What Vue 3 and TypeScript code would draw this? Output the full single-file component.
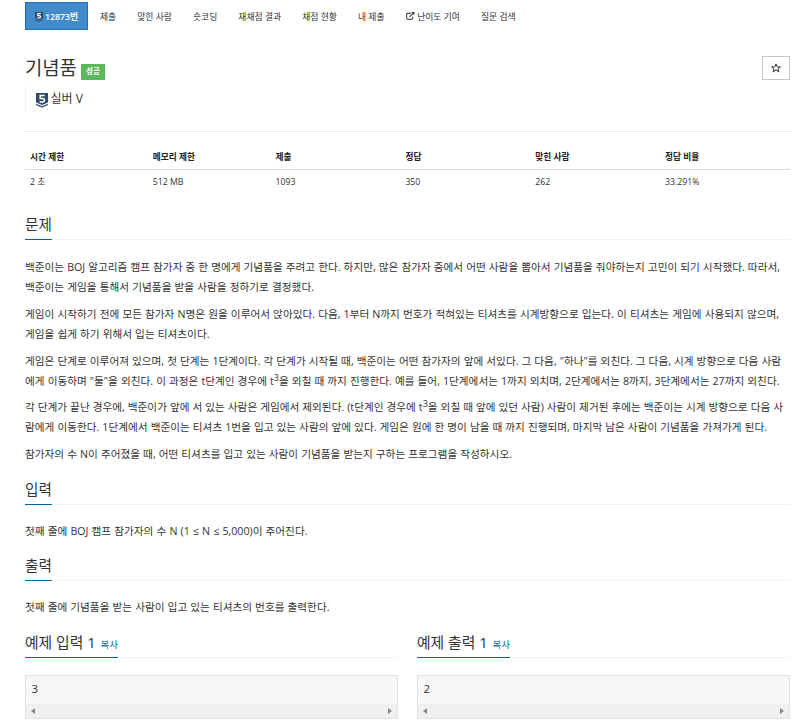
<script setup lang="ts">
interface NavItem { label: string; external?: boolean }
interface Stat { name: string; value: string }
interface Line { width: number; text: string; power?: string; rest?: string }
interface Section { title: string; paragraphs: Line[][] }

const navItems: NavItem[] = [
  { label: '제출' },
  { label: '맞힌 사람' },
  { label: '숏코딩' },
  { label: '재채점 결과' },
  { label: '채점 현황' },
  { label: '내 제출' },
  { label: '난이도 기여', external: true },
  { label: '질문 검색' },
]

const stats: Stat[] = [
  { name: '시간 제한', value: '2 초' },
  { name: '메모리 제한', value: '512 MB' },
  { name: '제출', value: '1093' },
  { name: '정답', value: '350' },
  { name: '맞힌 사람', value: '262' },
  { name: '정답 비율', value: '33.291%' },
]

const sections: Section[] = [
  {
    title: '문제',
    paragraphs: [
      [
        { width: 755, text: '백준이는 BOJ 알고리즘 캠프 참가자 중 한 명에게 기념품을 주려고 한다. 하지만, 많은 참가자 중에서 어떤 사람을 뽑아서 기념품을 줘야하는지 고민이 되기 시작했다. 따라서,' },
        { width: 289, text: '백준이는 게임을 통해서 기념품을 받을 사람을 정하기로 결정했다.' },
      ],
      [
        { width: 754, text: '게임이 시작하기 전에 모든 참가자 N명은 원을 이루어서 앉아있다. 다음, 1부터 N까지 번호가 적혀있는 티셔츠를 시계방향으로 입는다. 이 티셔츠는 게임에 사용되지 않으며,' },
        { width: 184.5, text: '게임을 쉽게 하기 위해서 입는 티셔츠이다.' },
      ],
      [
        { width: 756, text: '게임은 단계로 이루어져 있으며, 첫 단계는 1단계이다. 각 단계가 시작될 때, 백준이는 어떤 참가자의 앞에 서있다. 그 다음, "하나"를 외친다. 그 다음, 시계 방향으로 다음 사람' },
        { width: 754.5, text: '에게 이동하며 "둘"을 외친다. 이 과정은 t단계인 경우에 t', power: '3', rest: '을 외칠 때 까지 진행한다. 예를 들어, 1단계에서는 1까지 외치며, 2단계에서는 8까지, 3단계에서는 27까지 외친다.' },
      ],
      [
        { width: 758, text: '각 단계가 끝난 경우에, 백준이가 앞에 서 있는 사람은 게임에서 제외된다. (t단계인 경우에 t', power: '3', rest: '을 외칠 때 앞에 있던 사람) 사람이 제거된 후에는 백준이는 시계 방향으로 다음 사' },
        { width: 742, text: '람에게 이동한다. 1단계에서 백준이는 티셔츠 1번을 입고 있는 사람의 앞에 있다. 게임은 원에 한 명이 남을 때 까지 진행되며, 마지막 남은 사람이 기념품을 가져가게 된다.' },
      ],
      [{ width: 487, text: '참가자의 수 N이 주어졌을 때, 어떤 티셔츠를 입고 있는 사람이 기념품을 받는지 구하는 프로그램을 작성하시오.' }],
    ],
  },
  {
    title: '입력',
    paragraphs: [[{ width: 282.5, text: '첫째 줄에 BOJ 캠프 참가자의 수 N (1 ≤ N ≤ 5,000)이 주어진다.' }]],
  },
  {
    title: '출력',
    paragraphs: [[{ width: 304.5, text: '첫째 줄에 기념품을 받는 사람이 입고 있는 티셔츠의 번호를 출력한다.' }]],
  },
]

const samples = [
  { title: '예제 입력 1', data: '3' },
  { title: '예제 출력 1', data: '2' },
]
</script>

<template>
  <main class="page">
    <nav class="tabs">
      <a class="tab active">
        <svg class="tier-small" viewBox="0 0 12 15">
          <path d="M0 0h12v9.5L6 12 0 9.5z" fill="#2f4a6b" />
          <path d="M0 10.7l6 2.4 6-2.4v1.6l-6 2.4-6-2.4z" fill="#2f4a6b" />
          <path d="M8.7 2.5H4.2v3h2c3 0 3 3.4 0 3.4H3.6" fill="none" stroke="#fff" stroke-width="1.7" />
        </svg>12873번
      </a>
      <a v-for="item in navItems" :key="item.label" class="tab">
        <svg v-if="item.external" class="external" viewBox="0 0 16 14">
          <path d="M9 2H3.2Q1.2 2 1.2 4v6.8q0 2 2 2H10q2 0 2-2V8.5M6 8.5L13.5 1.5" fill="none" stroke="currentColor" stroke-width="1.8" />
          <path d="M9.5 0H15v5.5z" fill="currentColor" />
        </svg>{{ item.label }}
      </a>
    </nav>

    <header class="heading">
      <div class="title-row">
        <h1>기념품</h1>
        <span class="badge">성공</span>
        <button class="star" type="button" aria-label="즐겨찾기">
          <svg viewBox="0 0 14 14">
            <path d="M7 1.3l1.6 4.1 4.5.1-3.5 2.6 1.3 4.2L7 9.8l-3.9 2.5 1.3-4.2L.9 5.5l4.5-.1z" />
          </svg>
        </button>
      </div>
      <div class="tier">
        <svg viewBox="0 0 12 15">
          <path d="M0 0h12v9.5L6 12 0 9.5z" fill="#2f4a6b" />
          <path d="M0 10.7l6 2.4 6-2.4v1.6l-6 2.4-6-2.4z" fill="#49617f" />
          <path d="M8.7 2.5H4.2v3h2c3 0 3 3.4 0 3.4H3.6" fill="none" stroke="#fff" stroke-width="1.5" />
        </svg>
        <span>실버 V</span>
      </div>
    </header>

    <table class="stats">
      <thead>
        <tr><th v-for="stat in stats" :key="stat.name">{{ stat.name }}</th></tr>
      </thead>
      <tbody>
        <tr><td v-for="stat in stats" :key="stat.name">{{ stat.value }}</td></tr>
      </tbody>
    </table>

    <section v-for="section in sections" :key="section.title" class="section">
      <div class="headline"><h2>{{ section.title }}</h2></div>
      <div class="content">
        <p v-for="(lines, i) in section.paragraphs" :key="i">
          <span v-for="(line, j) in lines" :key="j" class="line" :style="{ width: line.width + 'px' }">{{ line.text }}<sup v-if="line.power">{{ line.power }}</sup>{{ line.rest }}</span>
        </p>
      </div>
    </section>

    <div class="samples">
      <section v-for="sample in samples" :key="sample.title">
        <div class="headline"><h2>{{ sample.title }} <a class="copy">복사</a></h2></div>
        <div class="sample-box">
          <pre>{{ sample.data }}</pre>
          <div class="scrollbar">
            <svg viewBox="0 0 4 6"><path d="M4 0v6L0 3z" /></svg>
            <svg viewBox="0 0 4 6"><path d="M0 0v6l4-3z" /></svg>
          </div>
        </div>
      </section>
    </div>
  </main>
</template>

<style>
body {
  background: #fff;
}
</style>

<style scoped>
.page {
  box-sizing: border-box;
  width: 800px;
  height: 726px;
  overflow: hidden;
  padding: 2px 10px 0 25px;
  font-family: 'Open Sans', 'Noto Sans CJK KR', sans-serif;
  font-size: 10.65px;
  color: #333;
}
.tabs {
  display: flex;
  height: 28px;
}
.tab {
  display: flex;
  align-items: center;
  padding: 0 10.55px;
  font-size: 8.8px;
  white-space: nowrap;
}
.tab.active {
  box-sizing: border-box;
  width: 63px;
  margin-right: 1.4px;
  padding: 0;
  justify-content: center;
  background: #428bca;
  border: 1px solid #1b6fb3;
  color: #fff;
  font-weight: 600;
}
.tier-small {
  width: 8px;
  height: 10px;
  margin: 1px 2px 0 0;
}
.external {
  width: 9px;
  height: 8px;
  margin-right: 2.5px;
}
.heading {
  height: 101px;
  border-bottom: 1px solid #eee;
}
.title-row {
  display: flex;
  height: 54px;
}
h1 {
  margin: 24px 4.2px 0 0;
  font-size: 18.8px;
  line-height: 28px;
  font-weight: 400;
}
.badge {
  box-sizing: border-box;
  width: 24px;
  height: 16px;
  margin-top: 34px;
  background: #5cb85c;
  color: #fff;
  font-size: 7.6px;
  line-height: 15px;
  font-weight: 700;
  text-align: center;
}
.star {
  box-sizing: border-box;
  width: 28px;
  height: 24px;
  margin: 26px 0 0 auto;
  padding: 0;
  display: flex;
  align-items: center;
  justify-content: center;
  background: #fff;
  border: 1px solid #c6c6c6;
}
.star svg {
  width: 10px;
  height: 10px;
  fill: none;
  stroke: #333;
  stroke-width: 1.4;
}
.tier {
  display: flex;
  align-items: center;
  height: 26px;
  margin-top: 2px;
  padding-left: 10px;
  border-left: 1px solid #eee;
  font-size: 12px;
}
.tier span {
  margin-bottom: 2px;
}
.tier svg {
  width: 12px;
  height: 15px;
  margin: 2px 2.5px 0 0;
}
.stats {
  width: 765px;
  margin-top: 14px;
  border-collapse: collapse;
  table-layout: fixed;
  font-size: 8.7px;
  text-align: left;
}
.stats th,
.stats td {
  width: 17%;
  padding: 0 5px;
}
.stats th:nth-child(-n + 2) {
  width: 16%;
}
.stats th {
  height: 21px;
  padding-bottom: 2px;
  border-bottom: 1px solid #ddd;
  font-weight: 700;
  color: #222;
}
.stats td {
  height: 23px;
}
.section:first-of-type {
  margin-top: 18px;
}
.headline {
  display: flex;
  height: 29px;
  box-sizing: border-box;
  border-bottom: 1px dotted #e4e9f0;
}
h2 {
  height: 29px;
  box-sizing: border-box;
  margin: 0;
  border-bottom: 1px solid #0067a3;
  font-size: 14.6px;
  line-height: 26px;
  font-weight: 400;
  white-space: nowrap;
}
.content {
  padding: 16.2px 0 4.2px;
}
.section:first-of-type .content {
  padding: 17px 0 5px;
}
p {
  margin: 0 0 6.6px;
}
.line {
  display: block;
  height: 20.1px;
  line-height: 20.1px;
  text-align-last: justify;
}
sup {
  position: relative;
  top: -0.45em;
  font-size: 85%;
  line-height: 0;
  vertical-align: baseline;
}
.samples {
  display: grid;
  grid-template-columns: 1fr 1fr;
  gap: 19px;
  margin-top: 1.2px;
}
.samples h2 {
  font-size: 14.8px;
}
.copy {
  margin-left: 1px;
  font-size: 9.5px;
  color: #0067a3;
}
.sample-box {
  box-sizing: border-box;
  height: 44px;
  margin-top: 17px;
  background: #f7f7f9;
  border: 1px solid #e1e1e8;
}
pre {
  height: 28px;
  margin: 0;
  padding-left: 5.5px;
  font: 11.4px/26px 'Open Sans', sans-serif;
}
.scrollbar {
  display: flex;
  align-items: center;
  justify-content: space-between;
  height: 14px;
  padding: 0 5px;
  background: #f0f0f0;
}
.scrollbar svg {
  width: 4px;
  height: 6px;
  fill: #888;
}
</style>
